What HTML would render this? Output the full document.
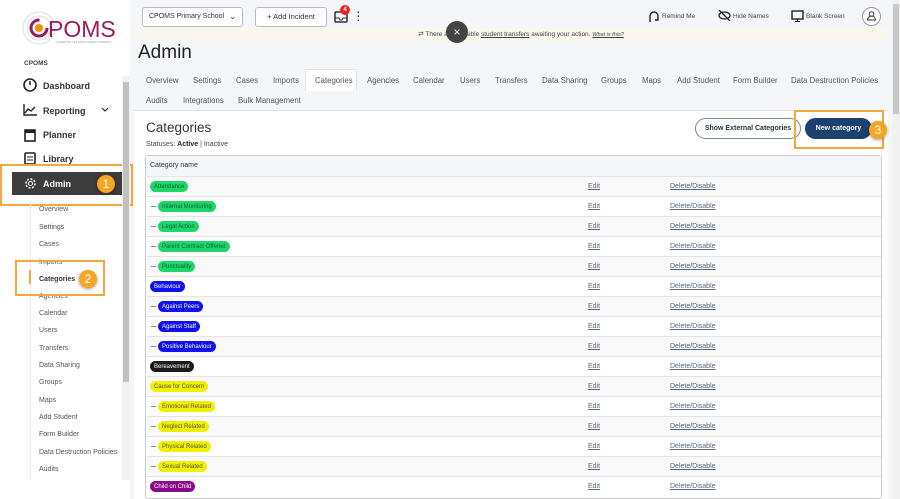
<!DOCTYPE html>
<html><head><meta charset="utf-8">
<style>
*{box-sizing:border-box;margin:0;padding:0}
body{width:900px;height:499px;overflow:hidden;background:#f5f6f9;font-family:"Liberation Sans",sans-serif;position:relative;color:#333}
.abs{position:absolute}
.side{left:0;top:0;width:130px;height:499px;background:#fff}
.nav{left:24px;font-size:9px;font-weight:bold;color:#333}
.sub{left:39px;font-size:7px;color:#555}
.orange{border:2px solid #f2a93b;position:absolute}
.badge{position:absolute;width:18px;height:18px;border-radius:50%;background:#f5a623;color:#fff;font-size:12px;text-align:center;line-height:18px;box-shadow:0 1px 3px rgba(0,0,0,.4)}
.tab{position:absolute;font-size:7.8px;color:#555}
.row{position:absolute;left:147px;width:734px;height:20px;border-top:1px solid #e4e4e4}
.pill{position:absolute;top:4px;height:11px;border-radius:6px;font-size:6px;padding:0 4px;display:flex;align-items:center;white-space:nowrap}
.g{background:#1fd66a;color:#063}.b{background:#1010ee;color:#fff}.k{background:#1a1a1a;color:#fff}.y{background:#f0f000;color:#554}.p{background:#8a0a8a;color:#fff}
.dash{position:absolute;left:4px;top:9px;width:5px;height:1px;background:#888}
.lnk{position:absolute;top:6px;font-size:7px;color:#567;text-decoration:underline}
</style></head><body>
<div class="abs side"></div>
<svg class="abs" style="left:20px;top:9px" width="104" height="38" viewBox="0 0 104 38">
<circle cx="19" cy="19" r="16" fill="none" stroke="#ddd" stroke-width="1"/>
<circle cx="19" cy="19" r="12" fill="none" stroke="#ddd" stroke-width="1"/>
<circle cx="19" cy="19" r="8" fill="none" stroke="#9b1b5b" stroke-width="3" stroke-dasharray="38 20"/>
<circle cx="19" cy="19" r="4" fill="#f39200"/>
<text x="28" y="28" font-family="Liberation Sans" font-size="23" fill="#9b1b5b">POMS</text>
<text x="36" y="34" font-family="Liberation Sans" font-size="3" fill="#999">A RAPTOR TECHNOLOGIES COMPANY</text>
</svg>
<div class="abs" style="left:24px;top:60px;font-size:6.5px;font-weight:bold;color:#444">CPOMS</div>
<svg class="abs" style="left:23px;top:78px" width="14" height="14"><circle cx="7" cy="7" r="6" fill="none" stroke="#222" stroke-width="1.6"/><path d="M7 3v4" stroke="#222" stroke-width="1.5"/></svg>
<div class="abs nav" style="left:43px;top:81px">Dashboard</div>
<svg class="abs" style="left:23px;top:104px" width="14" height="12"><path d="M1 0v11h13M2 9l3-4 3 2 4-4" fill="none" stroke="#222" stroke-width="1.4"/></svg>
<div class="abs nav" style="left:43px;top:106px">Reporting</div>
<svg class="abs" style="left:101px;top:107px" width="8" height="6"><path d="M1 1l3 3 3-3" fill="none" stroke="#333" stroke-width="1.2"/></svg>
<svg class="abs" style="left:24px;top:128px" width="12" height="14"><rect x="1" y="2" width="10" height="11" fill="none" stroke="#222" stroke-width="1.6"/><rect x="1" y="2" width="10" height="3" fill="#222"/></svg>
<div class="abs nav" style="left:43px;top:130px">Planner</div>
<svg class="abs" style="left:24px;top:152px" width="12" height="14"><rect x="1" y="1" width="10" height="11" rx="1" fill="none" stroke="#222" stroke-width="1.6"/><path d="M3 5h6M3 8h6" stroke="#222"/></svg>
<div class="abs nav" style="left:43px;top:154px">Library</div>
<div class="abs" style="left:12px;top:172px;width:110px;height:23px;background:#3c3c3c"></div>
<svg class="abs" style="left:24px;top:177px" width="13" height="13"><circle cx="6.5" cy="6.5" r="4.5" fill="none" stroke="#fff" stroke-width="1.5" stroke-dasharray="2 1.5"/><circle cx="6.5" cy="6.5" r="2" fill="none" stroke="#fff"/></svg>
<div class="abs nav" style="left:43px;top:179px;color:#fff">Admin</div>
<div class="orange" style="left:0;top:164px;width:133px;height:42px"></div>
<div class="badge" style="left:97px;top:175px">1</div>
<div class="abs" style="left:30px;top:200px;width:1px;height:280px;background:#eee"></div>
<div class="abs sub" style="top:206px">Overview</div>
<div class="abs sub" style="top:224px">Settings</div>
<div class="abs sub" style="top:241px">Cases</div>
<div class="abs sub" style="top:259px">Imports</div>
<div class="abs" style="left:29px;top:270px;width:2px;height:14px;background:#f2a93b"></div>
<div class="abs sub" style="top:276px;font-weight:bold;color:#333">Categories</div>
<div class="abs sub" style="top:293px">Agencies</div>
<div class="abs sub" style="top:310px">Calendar</div>
<div class="abs sub" style="top:327px">Users</div>
<div class="abs sub" style="top:345px">Transfers</div>
<div class="abs sub" style="top:362px">Data Sharing</div>
<div class="abs sub" style="top:379px">Groups</div>
<div class="abs sub" style="top:397px">Maps</div>
<div class="abs sub" style="top:414px">Add Student</div>
<div class="abs sub" style="top:431px">Form Builder</div>
<div class="abs sub" style="top:449px">Data Destruction Policies</div>
<div class="abs sub" style="top:466px">Audits</div>
<div class="orange" style="left:15px;top:260px;width:90px;height:36px"></div>
<div class="badge" style="left:79px;top:270px">2</div>
<div class="abs" style="left:122px;top:76px;width:8px;height:404px;background:#f1f1f1"></div>
<div class="abs" style="left:123px;top:82px;width:6px;height:300px;background:#c1c1c1"></div>
<div class="abs" style="left:142px;top:7px;width:101px;height:20px;border:1px solid #bbb;border-radius:3px;background:#fff;font-size:7px;line-height:18px;padding-left:6px;color:#333">CPOMS Primary School<span style="position:absolute;right:6px;font-size:8px">&#8964;</span></div>
<div class="abs" style="left:255px;top:7px;width:72px;height:20px;border:1px solid #bbb;border-radius:3px;background:#fff;font-size:7.5px;line-height:18px;text-align:center;color:#333">+ Add Incident</div>
<svg class="abs" style="left:334px;top:9px" width="16" height="14"><rect x="1" y="3" width="12" height="10" rx="1" fill="none" stroke="#333" stroke-width="1.5"/><path d="M1 9h4l1 2h2l1-2h4" fill="none" stroke="#333"/></svg>
<div class="abs" style="left:340px;top:5px;width:10px;height:10px;border-radius:50%;background:#e22;color:#fff;font-size:6px;text-align:center;line-height:10px;font-weight:bold">4</div>
<div class="abs" style="left:357px;top:9px;font-size:10px;font-weight:bold;line-height:4px">.<br>.<br>.</div>
<div class="abs" style="left:134px;top:28px;width:754px;height:14px;background:#faf7ee;font-size:6.5px;color:#444;text-align:center;line-height:14px;padding-left:20px">&#8644; There are possible <u>student transfers</u> awaiting your action. <i style="font-size:5.5px"><u>What is this?</u></i></div>
<div class="abs" style="left:446px;top:21px;width:22px;height:22px;border-radius:50%;background:#444;color:#fff;text-align:center;line-height:22px;font-size:12px">×</div>
<svg class="abs" style="left:648px;top:10px" width="11" height="13"><path d="M2 12V6a4 4 0 0 1 8 0v4h-3" fill="none" stroke="#222" stroke-width="1.4"/></svg>
<div class="abs" style="left:662px;top:13px;font-size:6.5px;color:#444">Remind Me</div>
<svg class="abs" style="left:718px;top:10px" width="13" height="11"><ellipse cx="6.5" cy="5.5" rx="5.5" ry="3.5" fill="none" stroke="#222" stroke-width="1.3"/><path d="M1 0l11 11" stroke="#222" stroke-width="1.3"/></svg>
<div class="abs" style="left:733px;top:13px;font-size:6.5px;color:#444">Hide Names</div>
<svg class="abs" style="left:791px;top:10px" width="13" height="12"><rect x="1" y="1" width="11" height="8" fill="none" stroke="#222" stroke-width="1.4"/><path d="M6.5 9v2M4 11.5h5" stroke="#222"/></svg>
<div class="abs" style="left:806px;top:13px;font-size:6.5px;color:#444">Blank Screen</div>
<div class="abs" style="left:862px;top:7px;width:19px;height:19px;border:1px solid #999;border-radius:50%;background:#fff"></div>
<svg class="abs" style="left:866px;top:10px" width="11" height="12"><circle cx="5.5" cy="4" r="2.3" fill="none" stroke="#333"/><path d="M1.5 10a4 4 0 0 1 8 0z" fill="none" stroke="#333"/></svg>
<div class="abs" style="left:138px;top:42px;font-size:19px;color:#222">Admin</div>
<div class="abs" style="left:305px;top:69px;width:52px;height:22px;background:#fff;border:1px solid #e3e3e3;border-bottom:none"></div>
<div class="tab" style="left:146px;top:76px">Overview</div>
<div class="tab" style="left:193px;top:76px">Settings</div>
<div class="tab" style="left:236px;top:76px">Cases</div>
<div class="tab" style="left:273px;top:76px">Imports</div>
<div class="tab" style="left:315px;top:76px">Categories</div>
<div class="tab" style="left:367px;top:76px">Agencies</div>
<div class="tab" style="left:413px;top:76px">Calendar</div>
<div class="tab" style="left:460px;top:76px">Users</div>
<div class="tab" style="left:495px;top:76px">Transfers</div>
<div class="tab" style="left:542px;top:76px">Data Sharing</div>
<div class="tab" style="left:601px;top:76px">Groups</div>
<div class="tab" style="left:642px;top:76px">Maps</div>
<div class="tab" style="left:677px;top:76px">Add Student</div>
<div class="tab" style="left:733px;top:76px">Form Builder</div>
<div class="tab" style="left:791px;top:76px">Data Destruction Policies</div>
<div class="tab" style="left:146px;top:96px">Audits</div>
<div class="tab" style="left:183px;top:96px">Integrations</div>
<div class="tab" style="left:238px;top:96px">Bulk Management</div>
<div class="abs" style="left:134px;top:110px;width:754px;height:389px;background:#fff;border-top:1px solid #e3e3e3"></div>
<div class="abs" style="left:146px;top:120px;font-size:13.5px;color:#333">Categories</div>
<div class="abs" style="left:146px;top:141px;font-size:7px;color:#444">Statuses: <b style="color:#222">Active</b> | Inactive</div>
<div class="abs" style="left:695px;top:118px;width:106px;height:21px;border:1px solid #789;border-radius:11px;font-size:7px;font-weight:bold;color:#234;text-align:center;line-height:19px">Show External Categories</div>
<div class="abs" style="left:805px;top:118px;width:67px;height:21px;background:#1a4170;border-radius:11px;font-size:7px;font-weight:bold;color:#fff;text-align:center;line-height:21px">New category</div>
<div class="orange" style="left:794px;top:110px;width:90px;height:39px"></div>
<div class="badge" style="left:869px;top:121px">3</div>
<div class="abs" style="left:145px;top:155px;width:737px;height:344px;border:1px solid #ccc;border-radius:3px;background:#fff"></div>
<div class="abs" style="left:146px;top:156px;width:735px;height:20px;background:#f5f6f9;font-size:7px;color:#333;padding:0 0 0 4px;line-height:19px">Category name</div>
<div id="rows"></div>
<script>
var d=[["Attendance","g",0],["Internal Monitoring","g",1],["Legal Action","g",1],["Parent Contract Offered","g",1],["Punctuality","g",1],["Behaviour","b",0],["Against Peers","b",1],["Against Staff","b",1],["Positive Behaviour","b",1],["Bereavement","k",0],["Cause for Concern","y",0],["Emotional Related","y",1],["Neglect Related","y",1],["Physical Related","y",1],["Sexual Related","y",1],["Child on Child","p",0]];
var h="";d.forEach(function(r,i){var t=176+i*20;h+='<div class="row" style="top:'+t+'px;background:'+(i%2?'#fff':'#f9f9f9')+'">'+(r[2]?'<div class="dash"></div>':'')+'<span class="pill '+r[1]+'" style="left:'+(r[2]?11:3)+'px">'+r[0]+'</span><span class="lnk" style="left:441px">Edit</span><span class="lnk" style="left:523px">Delete/Disable</span></div>';});
document.getElementById("rows").innerHTML=h;
</script>
<div class="abs" style="left:892px;top:0;width:8px;height:499px;background:#f1f1f1"></div>
<div class="abs" style="left:893px;top:4px;width:6px;height:110px;background:#c8c8c8"></div>
</body></html>
